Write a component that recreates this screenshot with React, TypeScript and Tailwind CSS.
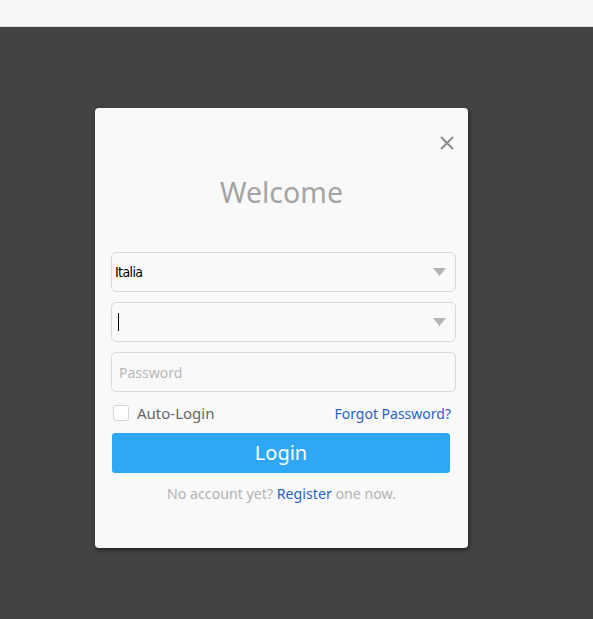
export default function App() {
  return (
    <div className="flex flex-col h-[619px] w-full bg-[#434343]" style={{ fontFamily: '"Noto Sans", "Open Sans", sans-serif' }}>
      <div className="h-[27px] shrink-0 bg-[#f8f8f8] border-b border-[#dcdcdc]" />

      <div className="flex-1 pl-[95px] pt-[81px]">
        <div className="w-[373px] h-[440px] bg-[#f9f9f9] rounded-[4px] shadow-[1px_2px_4px_rgba(0,0,0,0.5)] flex flex-col">
          <div className="flex justify-end pt-[28px] pr-[14px]">
            <svg width="14" height="14" viewBox="0 0 14 14" className="text-[#8c8c8c]">
              <path d="M1 1 L13 13 M13 1 L1 13" stroke="currentColor" strokeWidth="2" />
            </svg>
          </div>

          <h1 className="mt-[26px] text-center text-[28.5px] leading-[32px] text-[#a4a4a4]">Welcome</h1>

          <div className="mt-[44px] pl-[16px] pr-[12px] flex flex-col gap-[10px]">
            <div className="h-[40px] border border-[#d9d9d9] rounded-[5px] flex items-center justify-between pl-[3px] pr-[9px]">
              <span className="text-[14px] text-black tracking-[-0.6px]" style={{ fontFamily: '"DejaVu Sans Condensed", "Liberation Sans", sans-serif' }}>Italia</span>
              <svg width="13" height="8" viewBox="0 0 13 8"><path d="M0 0 H13 L6.5 8 Z" fill="#b4b4b4" /></svg>
            </div>
            <div className="h-[40px] border border-[#d9d9d9] rounded-[5px] flex items-center justify-between pl-[6px] pr-[9px]">
              <span className="w-px h-[18px] bg-black" />
              <svg width="13" height="8" viewBox="0 0 13 8"><path d="M0 0 H13 L6.5 8 Z" fill="#b4b4b4" /></svg>
            </div>
            <div className="h-[40px] border border-[#d9d9d9] rounded-[5px] flex items-center pl-[7px]">
              <span className="text-[14px] text-[#b8b8b8]">Password</span>
            </div>
          </div>

          <div className="mt-[11px] pl-[18px] pr-[17px] flex items-center justify-between h-[20px]">
            <label className="flex items-center gap-[8px]">
              <span className="w-[16px] h-[16px] border border-[#d4d4d4] rounded-[3px] bg-white" />
              <span className="text-[15px] text-[#666666]">Auto-Login</span>
            </label>
            <span className="text-[14px] text-[#2b62c4]">Forgot Password?</span>
          </div>

          <div className="mt-[10px] pl-[17px] pr-[18px]">
            <button className="w-full h-[40px] rounded-[3px] bg-[#2ea7f4] text-white text-[20px]">Login</button>
          </div>

          <p className="mt-[10px] text-center text-[14.2px] text-[#b3b3b3]">
            No account yet? <span className="text-[#2b62c4]">Register</span> one now.
          </p>
        </div>
      </div>
    </div>
  );
}
